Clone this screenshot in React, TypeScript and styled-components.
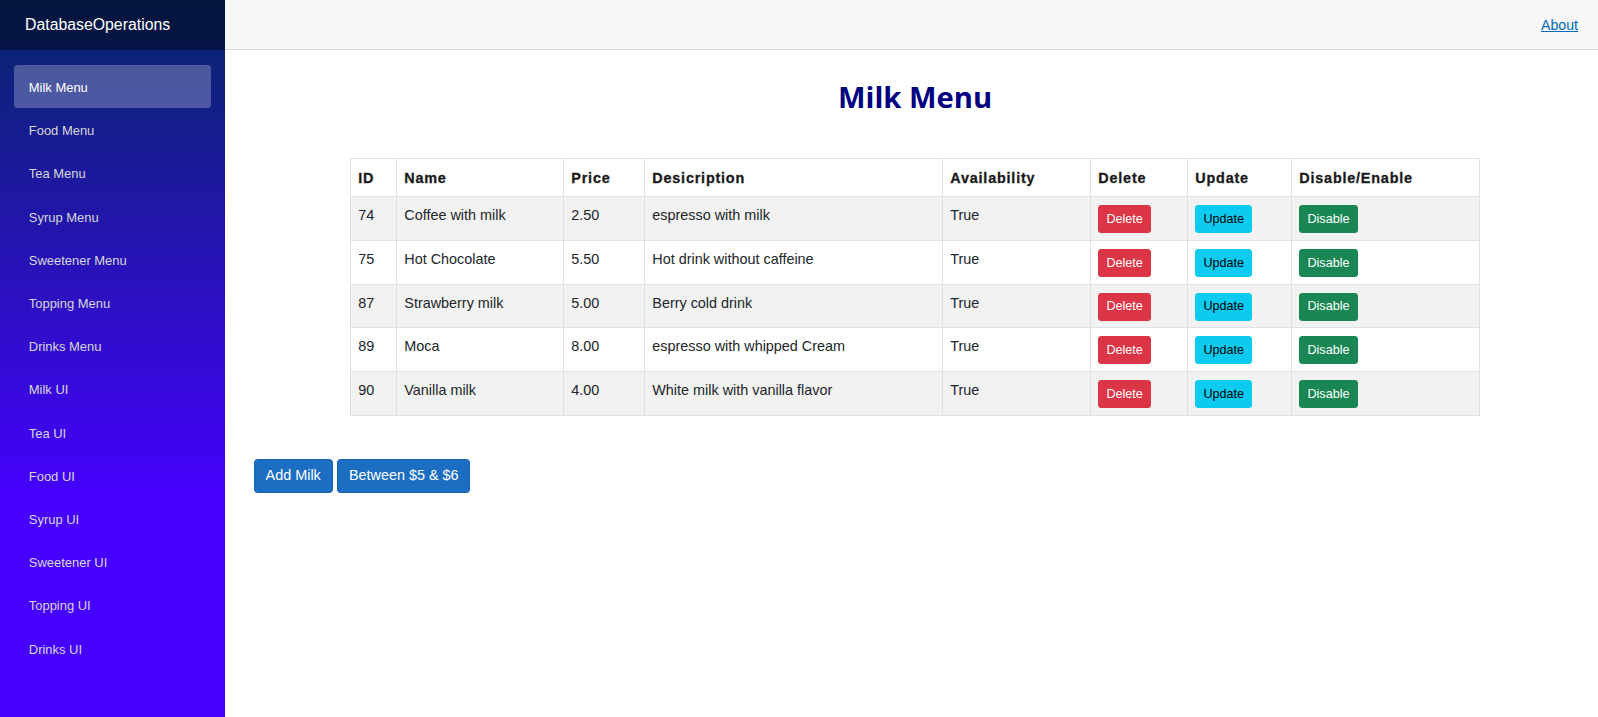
import React from "react";
import styled, { createGlobalStyle } from "styled-components";

const Global = createGlobalStyle`
  html, body { margin: 0; padding: 0; }
  body {
    font-family: "Liberation Sans", Arial, Helvetica, sans-serif;
    color: #212529;
    background: #fff;
    overflow: hidden;
  }
  * { box-sizing: border-box; }
`;

const Page = styled.div`
  display: flex;
  min-height: 100vh;
`;

const Sidebar = styled.aside`
  width: 225px;
  flex: 0 0 225px;
  min-height: 100vh;
  background-image: linear-gradient(180deg, rgb(5, 39, 103) 0%, #4600ff 70%);
`;

const BrandRow = styled.div`
  height: 50px;
  display: flex;
  align-items: center;
  padding-left: 25px;
  background-color: rgba(0, 0, 0, 0.4);
`;

const Brand = styled.a`
  color: #fff;
  font-size: 15.84px;
  text-decoration: none;
  line-height: 1.5;
`;

const Nav = styled.nav`
  display: flex;
  flex-direction: column;
  padding-top: 15px;
`;

const NavItem = styled.div`
  padding: 0 14.4px;
  font-size: 12.96px;
`;

const NavLink = styled.a<{ $active?: boolean }>`
  display: flex;
  align-items: center;
  height: 43.2px;
  padding: 2px 0 0 14.4px;
  border-radius: 3.6px;
  color: ${(p) => (p.$active ? "#fff" : "#d7d7d7")};
  background: ${(p) => (p.$active ? "rgba(255, 255, 255, 0.25)" : "transparent")};
  text-decoration: none;
`;

const Main = styled.main`
  flex: 1;
  display: flex;
  flex-direction: column;
  min-width: 0;
`;

const TopRow = styled.header`
  height: 50px;
  display: flex;
  align-items: center;
  justify-content: flex-end;
  padding-right: 20px;
  background-color: #f7f7f7;
  border-bottom: 1px solid #d6d5d5;
`;

const AboutLink = styled.a`
  color: #006bb7;
  font-size: 14.2px;
  text-decoration: underline;
`;

const Content = styled.article`
  padding: 19.8px 21.6px 0 28.8px;
  display: flex;
  flex-direction: column;
`;

const Title = styled.h1`
  margin: 9px 0 0;
  text-align: center;
  font-family: "Open Sans", "Noto Sans", sans-serif;
  font-weight: 700;
  font-size: 29.2px;
  line-height: 36px;
  color: #000080;
`;

const Table = styled.table`
  margin: 43.4px auto 0;
  width: 1129px;
  table-layout: fixed;
  border-collapse: collapse;
  font-size: 14.4px;
  line-height: 21.6px;
  color: #212529;
`;

const Th = styled.th<{ $w: number }>`
  width: ${(p) => p.$w}px;
  text-align: left;
  padding: 8.4px 7.2px 7px;
  border: 1px solid #dee2e6;
  font-weight: 700;
  letter-spacing: 0.8px;
  -webkit-text-stroke: 0.3px #1a1a1a;
  color: #1a1a1a;
  vertical-align: top;
`;

const Tr = styled.tr<{ $striped: boolean }>`
  background: ${(p) => (p.$striped ? "#f2f2f2" : "#fff")};
`;

const Td = styled.td`
  padding: 8.2px 7.2px 6.4px;
  border: 1px solid #dee2e6;
  vertical-align: top;
`;

const SmallBtn = styled.button<{ $bg: string; $fg: string }>`
  display: inline-block;
  font-family: "Liberation Sans", Arial, sans-serif;
  font-size: 12.6px;
  line-height: 18.9px;
  padding: 3.6px 7.2px;
  border: 1px solid ${(p) => p.$bg};
  border-radius: 3px;
  background: ${(p) => p.$bg};
  color: ${(p) => p.$fg};
  cursor: pointer;
  vertical-align: top;
`;

const Toolbar = styled.div`
  display: flex;
  gap: 4.6px;
  margin-top: 43.5px;
`;

const PrimaryBtn = styled.button`
  font-family: "Liberation Sans", Arial, sans-serif;
  font-size: 14.4px;
  line-height: 21.6px;
  padding: 5.4px 10.8px;
  color: #fff;
  background-color: #1b6ec2;
  border: 1px solid #1861ac;
  border-radius: 3.6px;
  cursor: pointer;
`;

const navItems = [
  "Milk Menu",
  "Food Menu",
  "Tea Menu",
  "Syrup Menu",
  "Sweetener Menu",
  "Topping Menu",
  "Drinks Menu",
  "Milk UI",
  "Tea UI",
  "Food UI",
  "Syrup UI",
  "Sweetener UI",
  "Topping UI",
  "Drinks UI",
];

const columns: [string, number][] = [
  ["ID", 46],
  ["Name", 167],
  ["Price", 81],
  ["Desicription", 298],
  ["Availability", 148],
  ["Delete", 97],
  ["Update", 104],
  ["Disable/Enable", 188],
];

const rows = [
  { id: 74, name: "Coffee with milk", price: "2.50", desc: "espresso with milk" },
  { id: 75, name: "Hot Chocolate", price: "5.50", desc: "Hot drink without caffeine" },
  { id: 87, name: "Strawberry milk", price: "5.00", desc: "Berry cold drink" },
  { id: 89, name: "Moca", price: "8.00", desc: "espresso with whipped Cream" },
  { id: 90, name: "Vanilla milk", price: "4.00", desc: "White milk with vanilla flavor" },
];

export default function App() {
  return (
    <>
      <Global />
      <Page>
        <Sidebar>
          <BrandRow>
            <Brand href="#">DatabaseOperations</Brand>
          </BrandRow>
          <Nav>
            {navItems.map((n, i) => (
              <NavItem key={n}>
                <NavLink href="#" $active={i === 0}>
                  {n}
                </NavLink>
              </NavItem>
            ))}
          </Nav>
        </Sidebar>
        <Main>
          <TopRow>
            <AboutLink href="#">About</AboutLink>
          </TopRow>
          <Content>
            <Title>Milk Menu</Title>
            <Table>
              <thead>
                <tr>
                  {columns.map(([c, w]) => (
                    <Th key={c} $w={w}>
                      {c}
                    </Th>
                  ))}
                </tr>
              </thead>
              <tbody>
                {rows.map((r, i) => (
                  <Tr key={r.id} $striped={i % 2 === 0}>
                    <Td>{r.id}</Td>
                    <Td>{r.name}</Td>
                    <Td>{r.price}</Td>
                    <Td>{r.desc}</Td>
                    <Td>True</Td>
                    <Td>
                      <SmallBtn $bg="#dc3545" $fg="#fff">Delete</SmallBtn>
                    </Td>
                    <Td>
                      <SmallBtn $bg="#0dcaf0" $fg="#000">Update</SmallBtn>
                    </Td>
                    <Td>
                      <SmallBtn $bg="#198754" $fg="#fff">Disable</SmallBtn>
                    </Td>
                  </Tr>
                ))}
              </tbody>
            </Table>
            <Toolbar>
              <PrimaryBtn>Add Milk</PrimaryBtn>
              <PrimaryBtn>Between $5 &amp; $6</PrimaryBtn>
            </Toolbar>
          </Content>
        </Main>
      </Page>
    </>
  );
}
